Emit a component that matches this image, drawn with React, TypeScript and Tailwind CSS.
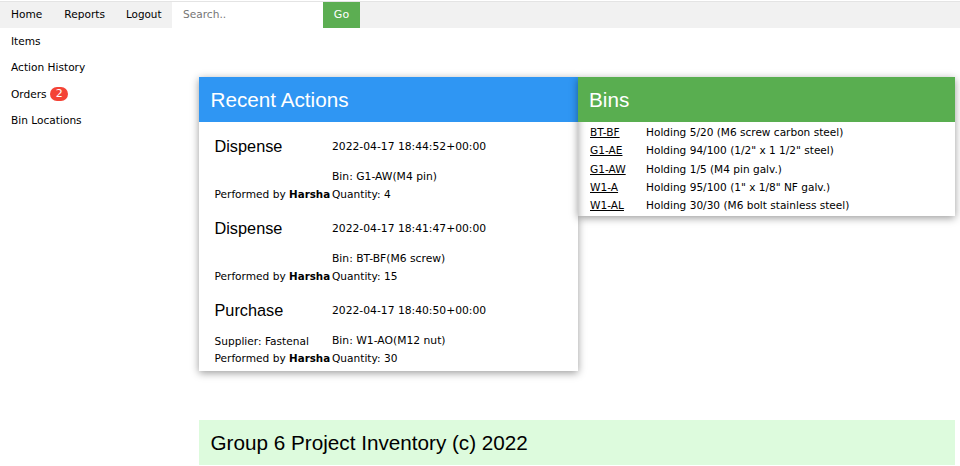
const sideLinks = ["Items", "Action History", "Orders", "Bin Locations"];

const actions = [
  { type: "Dispense", time: "2022-04-17 18:44:52+00:00", supplier: "", bin: "Bin: G1-AW(M4 pin)", qty: "Quantity: 4" },
  { type: "Dispense", time: "2022-04-17 18:41:47+00:00", supplier: "", bin: "Bin: BT-BF(M6 screw)", qty: "Quantity: 15" },
  { type: "Purchase", time: "2022-04-17 18:40:50+00:00", supplier: "Supplier: Fastenal", bin: "Bin: W1-AO(M12 nut)", qty: "Quantity: 30" },
];

const bins = [
  { code: "BT-BF", text: "Holding 5/20 (M6 screw carbon steel)" },
  { code: "G1-AE", text: 'Holding 94/100 (1/2" x 1 1/2" steel)' },
  { code: "G1-AW", text: "Holding 1/5 (M4 pin galv.)" },
  { code: "W1-A", text: 'Holding 95/100 (1" x 1/8" NF galv.)' },
  { code: "W1-AL", text: "Holding 30/30 (M6 bolt stainless steel)" },
];

const arial = "font-['Liberation_Sans',Arial,sans-serif]";

export default function App() {
  return (
    <div className="h-[466px] overflow-hidden bg-white pt-px text-[10.6px] text-black font-['DejaVu_Sans',Verdana,sans-serif]">
      {/* Top bar */}
      <div className="flex h-[27px] border-t border-[#e4e4e4] bg-[#f1f1f1]">
        <div className="flex w-[172px] shrink-0">
          <a className="flex items-center pr-[11px] pl-[11px]">Home</a>
          <a className="flex items-center pr-[11px] pl-[11px]">Reports</a>
          <a className="flex items-center pr-[11px] pl-[10px] text-[10.4px]">Logout</a>
        </div>
        <div className="flex w-[151px] items-center bg-white px-[11px] text-[#757575]">Search..</div>
        <button className="w-[37px] bg-[#5cae52] text-[11px] text-white">Go</button>
      </div>

      <div className="flex">
        {/* Sidebar */}
        <div className="w-[199px] shrink-0 pt-[0.5px]">
          {sideLinks.map((link) => (
            <div key={link} className="flex h-[26.4px] items-center gap-[3.5px] px-[11px]">
              {link}
              {link === "Orders" && (
                <span className="flex h-[14px] w-[18px] items-center justify-center rounded-full bg-[#f44336] text-[11px] text-white">2</span>
              )}
            </div>
          ))}
        </div>

        {/* Main */}
        <div className="w-[756px] pt-[49px]">
          <div className="flex items-start">
            <div className="w-[379px] shadow-[0_2px_8px_rgba(0,0,0,0.4)]">
              <div className={`flex h-[45px] items-center bg-[#2f96f3] px-[11.5px] text-[20.7px] text-white ${arial}`}>Recent Actions</div>
              <div className="flex flex-col gap-[11px] px-[15.5px] pt-[11px] pb-[3px]">
                {actions.map((a) => (
                  <div key={a.time} className="grid grid-cols-[117.5px_1fr] grid-rows-[27px_25.5px_18.5px] items-center">
                    <div className={`text-[16.3px] ${arial}`}>{a.type}</div>
                    <div className="pt-[2px] text-[10.75px]">{a.time}</div>
                    <div className="self-end">{a.supplier}</div>
                    <div className="self-end text-[10.75px]">{a.bin}</div>
                    <div className="whitespace-nowrap">
                      Performed by <b className="text-[10.3px]">Harsha</b>
                    </div>
                    <div>{a.qty}</div>
                  </div>
                ))}
              </div>
            </div>

            <div className="w-[377px] shadow-[0_2px_8px_rgba(0,0,0,0.4)]">
              <div className={`flex h-[45px] items-center bg-[#59ae50] px-[11px] text-[20.7px] text-white ${arial}`}>Bins</div>
              <div className="px-[12px] pt-[1.5px] pb-[0.5px]">
                {bins.map((b) => (
                  <div key={b.code} className="flex h-[18.4px] items-center">
                    <a className="w-[56px] underline">{b.code}</a>
                    <span className="text-[10.55px]">{b.text}</span>
                  </div>
                ))}
              </div>
            </div>
          </div>

          <div className={`mt-[49px] flex h-[45px] items-center bg-[#ddfbdd] px-[11.5px] text-[20.7px] ${arial}`}>
            Group 6 Project Inventory (c) 2022
          </div>
        </div>
      </div>
    </div>
  );
}
